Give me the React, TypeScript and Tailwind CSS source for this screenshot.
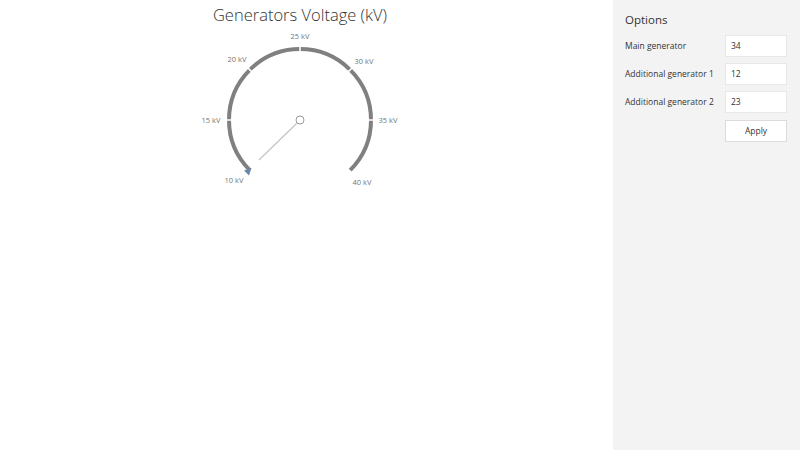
import React from "react";

const CX = 300;
const CY = 90;
const R = 71;

function pt(v: number, r: number) {
  const a = ((225 - (v - 10) * 9) * Math.PI) / 180;
  return { x: CX + r * Math.cos(a), y: CY - r * Math.sin(a) };
}

function Gauge() {
  const s = pt(10, R);
  const e = pt(40, R);
  const ticks = [15, 20, 25, 30, 35];
  const labels: { t: string; x: number; y: number }[] = [
    { t: "10 kV", x: 234, y: 151 },
    { t: "15 kV", x: 211, y: 91 },
    { t: "20 kV", x: 237, y: 30 },
    { t: "25 kV", x: 300, y: 7 },
    { t: "30 kV", x: 364, y: 32 },
    { t: "35 kV", x: 388, y: 91 },
    { t: "40 kV", x: 362, y: 153 },
  ];
  return (
    <svg width="600" height="170" viewBox="0 0 600 170" className="block">
      <path
        d={`M ${s.x} ${s.y} A ${R} ${R} 0 1 1 ${e.x} ${e.y}`}
        fill="none"
        stroke="#808080"
        strokeWidth="4"
      />
      {ticks.map((v) => {
        const a = pt(v, R - 4);
        const b = pt(v, R + 4);
        return <line key={v} x1={a.x} y1={a.y} x2={b.x} y2={b.y} stroke="#ffffff" strokeWidth="1.5" />;
      })}
      {labels.map((l) => (
        <text
          key={l.t}
          x={l.x}
          y={l.y}
          textAnchor="middle"
          dominantBaseline="middle"
          fontSize="7.5"
          fill="#767676"
          fontFamily="'Open Sans', sans-serif"
        >
          {l.t}
        </text>
      ))}
      <line x1={296.8} y1={93.2} x2={259} y2={130} stroke="#c4c4c4" strokeWidth="1.2" />
      <circle cx={CX} cy={CY} r="4" fill="#ffffff" stroke="#9a9a9a" strokeWidth="1" />
      <polygon points="251.5,138 244,140.5 249,145.5" fill="#6a86a8" />
    </svg>
  );
}

export default function App() {
  return (
    <div
      className="flex w-[800px] h-[450px] bg-white"
      style={{ fontFamily: "'Open Sans', sans-serif" }}
    >
      <div className="flex-1">
        <div className="w-[600px]">
          <div className="h-[30px] flex items-center justify-center text-[16.5px] font-light text-[#333333]">
            Generators Voltage (kV)
          </div>
          <Gauge />
        </div>
      </div>
      <div className="w-[187px] h-full bg-[#f3f3f3] pl-[12px] pr-[13px] pt-[10px]">
        <div className="text-[11.5px] text-[#333333] h-[20px] leading-[20px]">Options</div>
        <div className="mt-[5px] flex flex-col gap-[6px]">
          {[
            ["Main generator", "34"],
            ["Additional generator 1", "12"],
            ["Additional generator 2", "23"],
          ].map(([l, v]) => (
            <div key={l} className="flex items-center justify-between h-[22px]">
              <span className="text-[8.5px] text-[#333333]">{l}</span>
              <div className="w-[62px] h-[22px] bg-white border border-[#e8e8e8] pl-[5px] flex items-center text-[8.5px] text-[#333333]">
                {v}
              </div>
            </div>
          ))}
          <div className="flex justify-end mt-[1px]">
            <div className="w-[62px] h-[22px] bg-white border border-[#dcdcdc] flex items-center justify-center text-[8.5px] text-[#333333]">
              Apply
            </div>
          </div>
        </div>
      </div>
    </div>
  );
}
